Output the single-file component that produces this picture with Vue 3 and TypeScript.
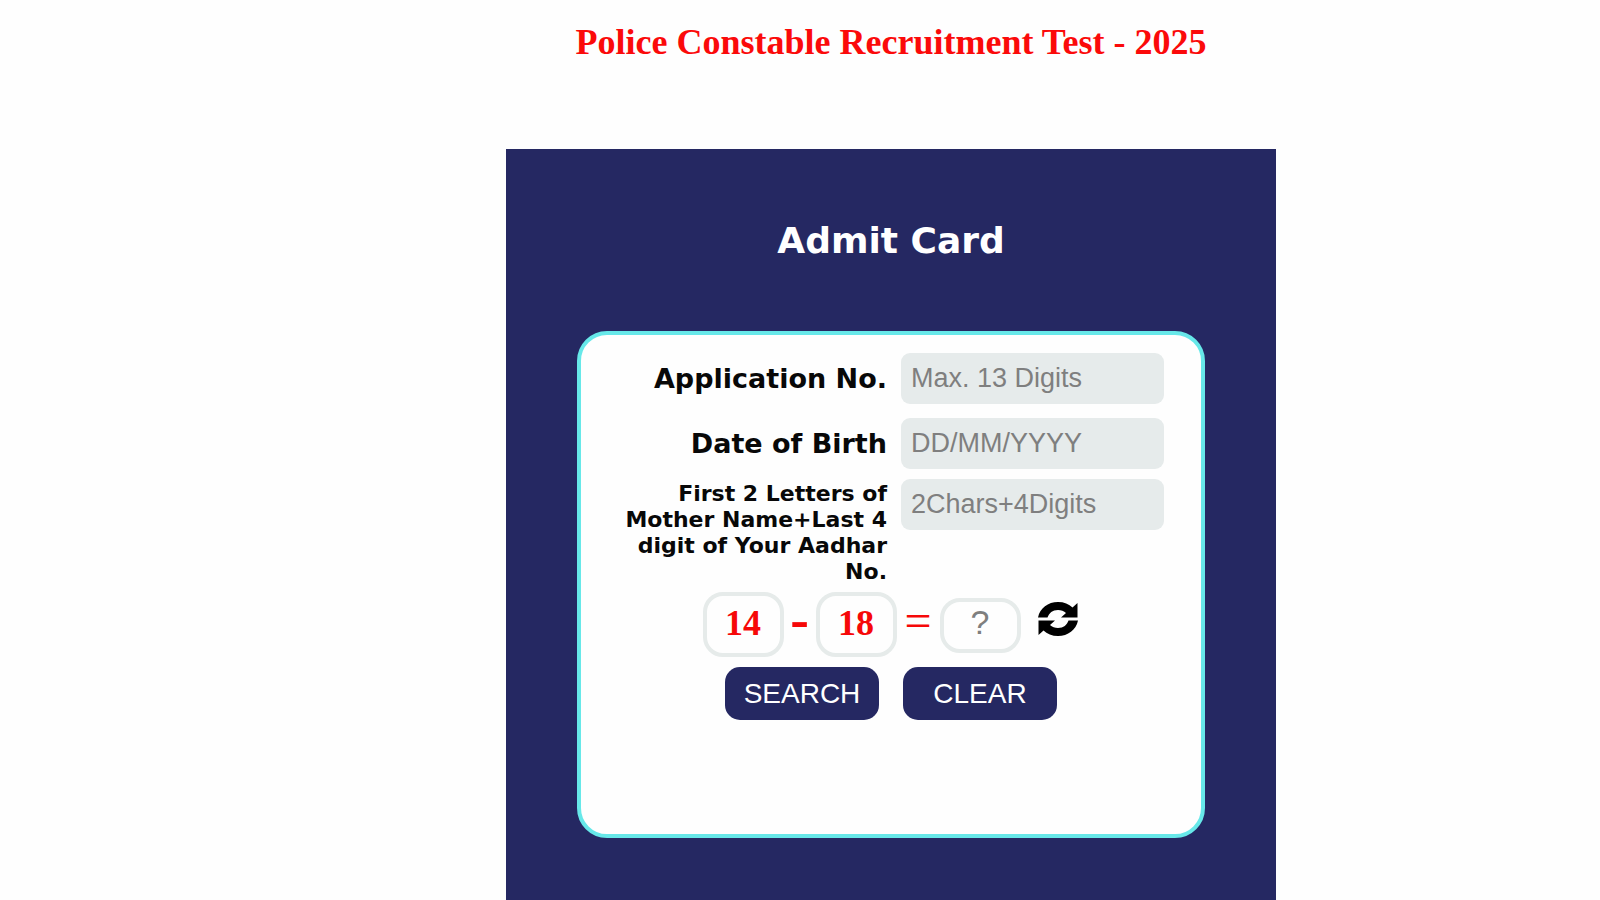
<script setup lang="ts">
import { reactive, ref } from 'vue'

interface Field {
  id: 'application' | 'birth' | 'identity'
  label: string
  placeholder: string
  small?: boolean
}

const fields: Field[] = [
  { id: 'application', label: 'Application No.', placeholder: 'Max. 13 Digits' },
  { id: 'birth', label: 'Date of Birth', placeholder: 'DD/MM/YYYY' },
  {
    id: 'identity',
    label: 'First 2 Letters of Mother Name+Last 4 digit of Your Aadhar No.',
    placeholder: '2Chars+4Digits',
    small: true,
  },
]

const values = reactive({ application: '', birth: '', identity: '' })
const answer = ref('')
const left = ref(14)
const right = ref(18)

function refresh(): void {
  left.value = 10 + Math.floor(Math.random() * 10)
  right.value = 10 + Math.floor(Math.random() * 10)
  answer.value = ''
}

function clearForm(): void {
  values.application = ''
  values.birth = ''
  values.identity = ''
  answer.value = ''
}
</script>

<template>
  <main class="page">
    <h1 class="title">Police Constable Recruitment Test - 2025</h1>
    <section class="panel">
      <h2 class="heading">Admit Card</h2>
      <form class="card" @submit.prevent>
        <div class="fields">
          <div v-for="f in fields" :key="f.id" class="row" :class="{ small: f.small }">
            <label class="label" :for="f.id">{{ f.label }}</label>
            <input :id="f.id" v-model="values[f.id]" class="input" type="text" :placeholder="f.placeholder" />
          </div>
        </div>
        <div class="captcha">
          <span class="number">{{ left }}</span>
          <span class="minus">-</span>
          <span class="number">{{ right }}</span>
          <span class="equals">=</span>
          <input v-model="answer" class="answer" type="text" placeholder="?" aria-label="Answer" />
          <button class="refresh" type="button" aria-label="Refresh" @click="refresh">
            <svg width="40" height="34" viewBox="0 0 40 34" aria-hidden="true">
              <path d="M0 15.500C2 6 10 0 20 0C26 0 31 2 34.500 5.500L39.500 1V15.500H23L28 11C26 9 23 8 20 8C14.500 8 11 11 9.500 15.500Z" />
              <path d="M40 18.500C38 28 30 34 20 34C14 34 9 32 5.500 28.500L0.500 33V18.500H17L12 23C14 25 17 26 20 26C25.500 26 29 23 30.500 18.500Z" />
            </svg>
          </button>
        </div>
        <div class="actions">
          <button class="button" type="submit">SEARCH</button>
          <button class="button" type="button" @click="clearForm">CLEAR</button>
        </div>
      </form>
    </section>
  </main>
</template>

<style>
body {
  margin: 0;
  background: #fefefe;
}
</style>

<style scoped>
.page {
  box-sizing: border-box;
  min-height: 100vh;
  padding-left: 182px;
  display: flex;
  flex-direction: column;
  align-items: center;
}
.title {
  margin: 22px 0 87px;
  font: bold 36px/40px "Liberation Serif", serif;
  color: #fb0a0a;
}
.panel {
  box-sizing: border-box;
  flex: 1;
  width: 100%;
  max-width: 770px;
  padding: 72px 71px 62px;
  background: #252862;
}
.heading {
  margin: 0 0 70px;
  text-align: center;
  font: bold 36px/40px "DejaVu Sans", sans-serif;
  color: #fff;
}
.card {
  box-sizing: border-box;
  min-height: 507px;
  padding: 18px 37px;
  border: 4px solid #67e8e9;
  border-radius: 30px;
  background: #fefefe;
}
.row {
  display: grid;
  grid-template-columns: 1fr 263px;
  column-gap: 14px;
  align-items: center;
  margin-bottom: 14px;
}
.row:nth-child(2) {
  margin-bottom: 10px;
}
.row.small {
  align-items: start;
  margin-bottom: 7px;
}
.label {
  text-align: right;
  font: bold 27px/32px "DejaVu Sans", sans-serif;
  color: #080808;
}
.small .label {
  padding-top: 2px;
  font-size: 22px;
  line-height: 26px;
}
.input {
  box-sizing: border-box;
  width: 100%;
  height: 51px;
  padding: 0 10px;
  border: 0;
  border-radius: 9px;
  background: #e6ebeb;
  font: 27px "Liberation Sans", sans-serif;
  color: #222;
}
.input::placeholder,
.answer::placeholder {
  color: #7f7f7f;
  opacity: 1;
}
.captcha {
  display: flex;
  justify-content: center;
  align-items: center;
  padding-right: 2px;
  color: #f60808;
}
.number {
  box-sizing: border-box;
  width: 81px;
  height: 65px;
  border: 4px solid #e6ebea;
  border-radius: 20px;
  text-align: center;
  font: bold 36px/54px "Liberation Serif", serif;
}
.minus,
.equals {
  width: 32px;
  padding-bottom: 12px;
  text-align: center;
  font: bold 56px/50px "Liberation Serif", serif;
}
.equals {
  width: 43px;
  padding-bottom: 8px;
  font-weight: normal;
  font-size: 48px;
}
.answer {
  box-sizing: border-box;
  width: 81px;
  height: 55px;
  margin-top: 2px;
  padding: 0 0 6px;
  border: 4px solid #e6ebea;
  border-radius: 20px;
  background: #fefefe;
  text-align: center;
  font: 34px "Liberation Sans", sans-serif;
  color: #222;
}
.refresh {
  margin: 0 0 12px 17px;
  padding: 0;
  border: 0;
  background: none;
  color: #000;
}
.refresh svg {
  display: block;
  fill: currentColor;
}
.actions {
  display: flex;
  justify-content: center;
  gap: 24px;
  margin-top: 10px;
}
.button {
  width: 154px;
  height: 53px;
  padding: 0;
  border: 0;
  border-radius: 15px;
  background: #252862;
  font: 28px "Liberation Sans", sans-serif;
  color: #fff;
}
</style>
